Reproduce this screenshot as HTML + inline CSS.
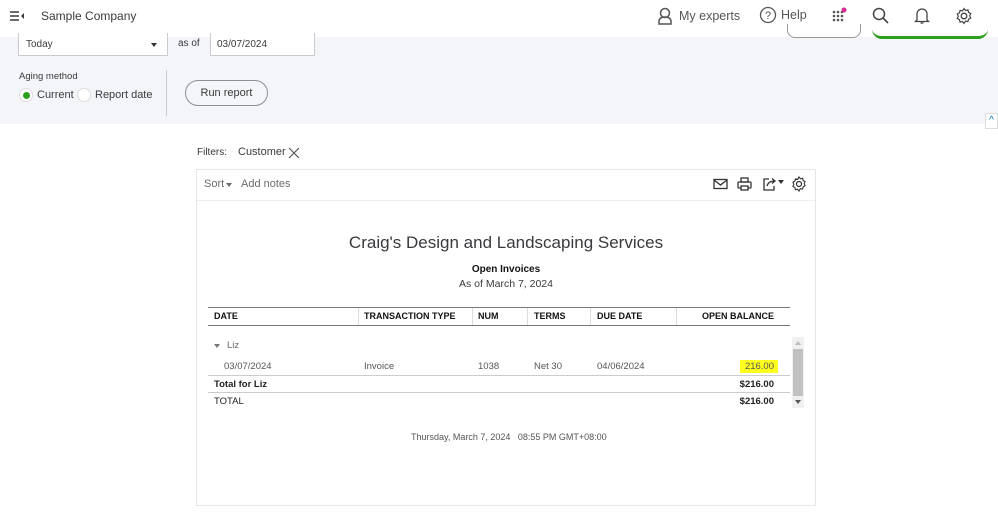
<!DOCTYPE html>
<html><head><meta charset="utf-8"><style>
*{margin:0;padding:0;box-sizing:border-box}
body{width:998px;height:523px;overflow:hidden;background:#fff;font-family:"Liberation Sans",sans-serif;color:#393a3d;position:relative}
.a{position:absolute;white-space:nowrap}
.f11{font-size:11px}.f10{font-size:10px}
.b{font-weight:bold}
</style></head><body>
<div class="a" style="left:0;top:37px;width:998px;height:87px;background:#f4f5f8"></div>
<!-- header -->
<div class="a" style="left:0;top:0;width:998px;height:37px;background:#fff"></div>
<svg class="a" style="left:9px;top:10px" width="17" height="12"><path d="M1 2h9M1 6h9M1 10h9" stroke="#393a3d" stroke-width="1.5"/><path d="M15 3v6l-3-3z" fill="#393a3d"/></svg>
<div class="a" style="left:41px;top:9px;font-size:12px">Sample Company</div>
<svg class="a" style="left:657px;top:7px" width="16" height="18"><circle cx="8" cy="6" r="4.5" fill="none" stroke="#555" stroke-width="1.5"/><path d="M2 17v-3c0-2 2-4 6-4s6 2 6 4v3z" fill="none" stroke="#555" stroke-width="1.5"/></svg>
<div class="a" style="left:679px;top:9px;font-size:12.5px;color:#555">My experts</div>
<svg class="a" style="left:759px;top:6px" width="18" height="18"><circle cx="9" cy="9" r="7.5" fill="none" stroke="#555" stroke-width="1.3"/><text x="9" y="13" font-size="11" text-anchor="middle" fill="#555" font-family="Liberation Sans">?</text></svg>
<div class="a" style="left:781px;top:8px;font-size:12.5px;color:#555">Help</div>
<svg class="a" style="left:832px;top:7px" width="16" height="16"><g fill="#555"><circle cx="2" cy="5" r="1.3"/><circle cx="6" cy="5" r="1.3"/><circle cx="10" cy="5" r="1.3"/><circle cx="2" cy="9" r="1.3"/><circle cx="6" cy="9" r="1.3"/><circle cx="10" cy="9" r="1.3"/><circle cx="2" cy="13" r="1.3"/><circle cx="6" cy="13" r="1.3"/><circle cx="10" cy="13" r="1.3"/></g><circle cx="12" cy="3" r="2.5" fill="#d52b8c"/></svg>
<svg class="a" style="left:872px;top:7px" width="18" height="18"><circle cx="7" cy="7" r="5.5" fill="none" stroke="#444" stroke-width="1.5"/><path d="M11 11l5 5" stroke="#444" stroke-width="1.6"/></svg>
<svg class="a" style="left:914px;top:6px" width="16" height="19"><path d="M3 14V8a5 5 0 0110 0v6l1.5 1.5h-13z" fill="none" stroke="#444" stroke-width="1.3"/><path d="M6.5 17h3" stroke="#444" stroke-width="1.3"/></svg>
<svg class="a" style="left:955px;top:7px" width="18" height="18"><circle cx="9" cy="9" r="2.8" fill="none" stroke="#444" stroke-width="1.3"/><path d="M9 1.5l1.5 2 2.4-.6.6 2.4 2.2 1.2-1 2.3 1 2.3-2.2 1.2-.6 2.4-2.4-.6L9 16.5l-1.5-2-2.4.6-.6-2.4-2.2-1.2 1-2.3-1-2.3 2.2-1.2.6-2.4 2.4.6z" fill="none" stroke="#444" stroke-width="1.2"/></svg>
<div class="a" style="left:787px;top:24px;width:74px;height:14px;border:1px solid #999;border-top:none;border-radius:0 0 8px 8px"></div>
<div class="a" style="left:872px;top:24px;width:116px;height:15px;border-bottom:3px solid #2ca01c;border-radius:0 0 10px 10px"></div>
<!-- controls -->
<div class="a" style="left:18px;top:33px;width:150px;height:23px;background:#fff;border:1px solid #c9cbd0;border-top:none"></div>
<div class="a f10" style="left:26px;top:39px">Today</div>
<div class="a" style="left:151px;top:43px;border-left:3.5px solid transparent;border-right:3.5px solid transparent;border-top:4px solid #333"></div>
<div class="a f10" style="left:178px;top:38px">as of</div>
<div class="a" style="left:210px;top:33px;width:105px;height:23px;background:#fff;border:1px solid #c9cbd0;border-top:none"></div>
<div class="a f10" style="left:217px;top:39px">03/07/2024</div>
<div class="a" style="left:19px;top:71px;font-size:9.5px">Aging method</div>
<div class="a" style="left:19px;top:88px;width:14px;height:14px;border-radius:50%;background:#fff;border:1px solid #ddd"></div>
<div class="a" style="left:23px;top:92px;width:7px;height:7px;border-radius:50%;background:#2ca01c"></div>
<div class="a f11" style="left:37px;top:89px">Current</div>
<div class="a" style="left:77px;top:88px;width:14px;height:14px;border-radius:50%;background:#fff;border:1px solid #ddd"></div>
<div class="a f11" style="left:95px;top:89px">Report date</div>
<div class="a" style="left:166px;top:70px;width:1px;height:46px;background:#c9cbd0"></div>
<div class="a" style="left:185px;top:80px;width:83px;height:26px;border:1px solid #8d9096;border-radius:13px;font-size:11px;text-align:center;line-height:24px">Run report</div>
<div class="a" style="left:985px;top:113px;width:13px;height:16px;background:#fff;border:1px solid #ddd;color:#0077c5;font-size:10px;text-align:center;line-height:14px">&#94;</div>
<!-- filters -->
<div class="a f10" style="left:197px;top:147px">Filters:</div>
<div class="a f11" style="left:238px;top:146px">Customer</div>
<svg class="a" style="left:288px;top:147px" width="12" height="12"><path d="M1 1l10 10M11 1L1 11" stroke="#555" stroke-width="1.2"/></svg>
<!-- card -->
<div class="a" style="left:196px;top:169px;width:620px;height:337px;border:1px solid #e3e5e8"></div>
<div class="a" style="left:197px;top:200px;width:618px;height:1px;background:#eceef1"></div>
<div class="a f11" style="left:204px;top:178px;color:#6b6c72">Sort</div>
<div class="a" style="left:226px;top:183px;border-left:3.5px solid transparent;border-right:3.5px solid transparent;border-top:4px solid #6b6c72"></div>
<div class="a f11" style="left:241px;top:178px;color:#6b6c72">Add notes</div>
<svg class="a" style="left:713px;top:178px" width="16" height="12"><rect x="1" y="1.5" width="13" height="9" fill="none" stroke="#333" stroke-width="1.3"/><path d="M1 2l6.5 5L14 2" fill="none" stroke="#333" stroke-width="1.3"/></svg>
<svg class="a" style="left:737px;top:177px" width="16" height="15"><rect x="4" y="1" width="7" height="4" fill="none" stroke="#333" stroke-width="1.3"/><rect x="1" y="5" width="13" height="6" rx="1" fill="none" stroke="#333" stroke-width="1.3"/><rect x="4" y="9" width="7" height="4" fill="#fff" stroke="#333" stroke-width="1.3"/></svg>
<svg class="a" style="left:762px;top:177px" width="24" height="15"><path d="M7 2H2v11h10v-4" fill="none" stroke="#333" stroke-width="1.3"/><path d="M5 9c1-4 4-5 8-5M10 1.5l3 2.5-3 2.5" fill="none" stroke="#333" stroke-width="1.3"/><path d="M16 3h6l-3 4z" fill="#333"/></svg>
<svg class="a" style="left:791px;top:176px" width="16" height="16"><circle cx="8" cy="8" r="2.5" fill="none" stroke="#333" stroke-width="1.2"/><path d="M8 1l1.4 1.8 2.2-.5.5 2.2 2 1.1-.9 2.1.9 2.1-2 1.1-.5 2.2-2.2-.5L8 15l-1.4-1.8-2.2.5-.5-2.2-2-1.1.9-2.1-.9-2.1 2-1.1.5-2.2 2.2.5z" fill="none" stroke="#333" stroke-width="1.1"/></svg>
<div class="a" style="left:197px;top:233px;width:618px;text-align:center;font-size:17px;color:#393a3d">Craig's Design and Landscaping Services</div>
<div class="a b" style="left:197px;top:264px;width:618px;text-align:center;font-size:10px;color:#111">Open Invoices</div>
<div class="a" style="left:197px;top:278px;width:618px;text-align:center;font-size:10.5px">As of March 7, 2024</div>
<div class="a" style="left:208px;top:307px;width:582px;height:1px;background:#777"></div>
<div class="a" style="left:208px;top:325px;width:582px;height:1px;background:#777"></div>
<div class="a" style="left:358px;top:308px;width:1px;height:17px;background:#ddd"></div>
<div class="a" style="left:472px;top:308px;width:1px;height:17px;background:#ddd"></div>
<div class="a" style="left:527px;top:308px;width:1px;height:17px;background:#ddd"></div>
<div class="a" style="left:590px;top:308px;width:1px;height:17px;background:#ddd"></div>
<div class="a" style="left:676px;top:308px;width:1px;height:17px;background:#ddd"></div>
<div class="a b" style="left:214px;top:311px;font-size:9px;color:#111">DATE</div>
<div class="a b" style="left:364px;top:311px;font-size:9px;color:#111">TRANSACTION TYPE</div>
<div class="a b" style="left:478px;top:311px;font-size:9px;color:#111">NUM</div>
<div class="a b" style="left:534px;top:311px;font-size:9px;color:#111">TERMS</div>
<div class="a b" style="left:597px;top:311px;font-size:9px;color:#111">DUE DATE</div>
<div class="a b" style="left:702px;top:311px;font-size:9px;color:#111">OPEN BALANCE</div>
<div class="a" style="left:214px;top:344px;border-left:3px solid transparent;border-right:3px solid transparent;border-top:4px solid #777"></div>
<div class="a" style="left:227px;top:340px;font-size:9.5px;color:#666">Liz</div>
<div class="a" style="left:224px;top:361px;font-size:9.5px;color:#555">03/07/2024</div>
<div class="a" style="left:364px;top:361px;font-size:9.5px;color:#555">Invoice</div>
<div class="a" style="left:478px;top:361px;font-size:9.5px;color:#555">1038</div>
<div class="a" style="left:534px;top:361px;font-size:9.5px;color:#555">Net 30</div>
<div class="a" style="left:597px;top:361px;font-size:9.5px;color:#555">04/06/2024</div>
<div class="a" style="left:740px;top:360px;width:38px;height:13px;background:#ffff1e"></div>
<div class="a" style="left:740px;top:361px;width:34px;text-align:right;font-size:9.5px;color:#555">216.00</div>
<div class="a" style="left:208px;top:375px;width:582px;height:1px;background:#ccc"></div>
<div class="a b" style="left:214px;top:379px;font-size:9.5px;color:#222">Total for Liz</div>
<div class="a b" style="left:720px;top:379px;width:54px;text-align:right;font-size:9.5px;color:#222">$216.00</div>
<div class="a" style="left:208px;top:392px;width:582px;height:1px;background:#ccc"></div>
<div class="a" style="left:214px;top:396px;font-size:9.5px;color:#222">TOTAL</div>
<div class="a b" style="left:720px;top:396px;width:54px;text-align:right;font-size:9.5px;color:#222">$216.00</div>
<div class="a" style="left:792px;top:337px;width:12px;height:71px;background:#f0f0f0"></div>
<div class="a" style="left:793px;top:349px;width:10px;height:47px;background:#c1c1c1"></div>
<div class="a" style="left:795px;top:400px;border-left:3px solid transparent;border-right:3px solid transparent;border-top:4px solid #555"></div>
<div class="a" style="left:795px;top:341px;border-left:3px solid transparent;border-right:3px solid transparent;border-bottom:4px solid #bbb"></div>
<div class="a" style="left:411px;top:432px;font-size:9px;color:#555">Thursday, March 7, 2024&nbsp;&nbsp; 08:55 PM GMT+08:00</div>
</body></html>
